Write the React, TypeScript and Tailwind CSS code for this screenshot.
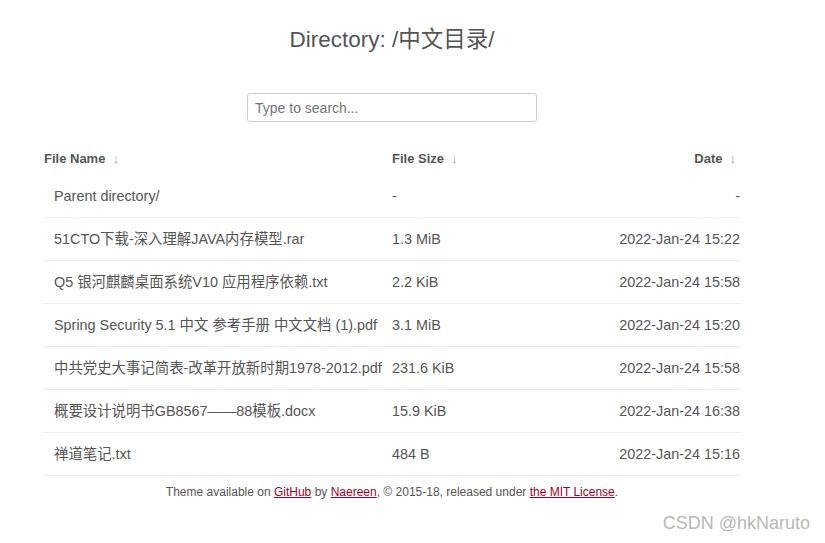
const FONT = '"Liberation Sans", Arial, "Noto Sans CJK SC", sans-serif';

type Entry = { name: string; size: string; date: string };

const entries: Entry[] = [
  { name: "Parent directory/", size: "-", date: "-" },
  { name: "51CTO下载-深入理解JAVA内存模型.rar", size: "1.3 MiB", date: "2022-Jan-24 15:22" },
  { name: "Q5 银河麒麟桌面系统V10 应用程序依赖.txt", size: "2.2 KiB", date: "2022-Jan-24 15:58" },
  { name: "Spring Security 5.1 中文 参考手册 中文文档 (1).pdf", size: "3.1 MiB", date: "2022-Jan-24 15:20" },
  { name: "中共党史大事记简表-改革开放新时期1978-2012.pdf", size: "231.6 KiB", date: "2022-Jan-24 15:58" },
  { name: "概要设计说明书GB8567——88模板.docx", size: "15.9 KiB", date: "2022-Jan-24 16:38" },
  { name: "禅道笔记.txt", size: "484 B", date: "2022-Jan-24 15:16" },
];

function SortArrow() {
  return <span className="ml-[7px] text-[13px] font-normal text-[#8fa0c8]">↓</span>;
}

export default function App() {
  return (
    <div className="relative h-[543px] w-[825px] overflow-hidden bg-white text-[#555]" style={{ fontFamily: FONT }}>
      <div className="ml-[44px] w-[696px]">
        {/* Title */}
        <h1 className="pt-[26px] text-center text-[22.5px] leading-[28px] font-normal text-[#555]">
          Directory: /中文目录/
        </h1>

        {/* Search */}
        <div className="mt-[39px] flex justify-center">
          <input
            type="text"
            placeholder="Type to search..."
            className="h-[29px] w-[290px] rounded-[3px] border border-[#ccc] px-[7px] text-[14px] text-[#555] outline-none placeholder:text-[#757575]"
          />
        </div>

        {/* Table */}
        <div className="mt-[19px]">
          <div className="grid h-[34px] grid-cols-[348px_1fr_1fr] items-center pt-[1px] text-[13px] font-bold text-[#555]">
            <div>
              File Name
              <SortArrow />
            </div>
            <div>
              File Size
              <SortArrow />
            </div>
            <div className="pr-[4px] text-right">
              Date
              <SortArrow />
            </div>
          </div>
          {entries.map((e) => (
            <div
              key={e.name}
              className="grid h-[43px] grid-cols-[348px_1fr_1fr] items-center border-b border-[#eceeef] pt-[2px] text-[14.4px] text-[#555]"
            >
              <div className="pl-[10px] whitespace-nowrap">{e.name}</div>
              <div>{e.size}</div>
              <div className="text-right">{e.date}</div>
            </div>
          ))}
        </div>

        {/* Footer */}
        <p className="mt-[7px] text-center text-[12px] leading-[18px] text-[#555]">
          Theme available on{" "}
          <a href="#" className="text-[#a0001e] underline">GitHub</a> by{" "}
          <a href="#" className="text-[#a0001e] underline">Naereen</a>, © 2015-18, released under{" "}
          <a href="#" className="text-[#a0001e] underline">the MIT License</a>.
        </p>
      </div>

      {/* Watermark */}
      <div className="absolute right-[15px] bottom-[6px] text-[18px] text-[#b8b8b8]">CSDN @hkNaruto</div>
    </div>
  );
}
